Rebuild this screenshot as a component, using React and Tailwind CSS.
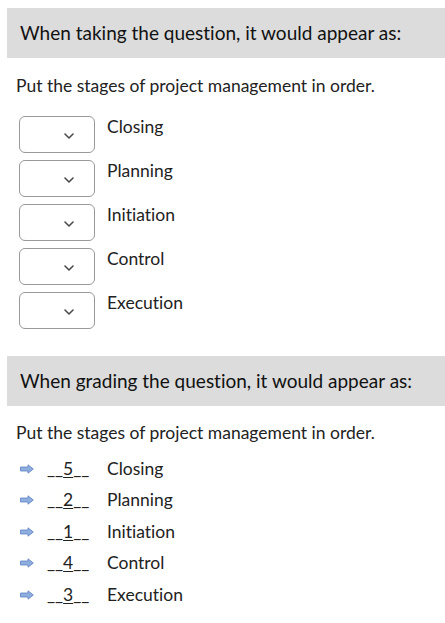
import React from 'react';

const stages = ['Closing', 'Planning', 'Initiation', 'Control', 'Execution'];
const answers = ['5', '2', '1', '4', '3'];

const Chevron = () => (
  <svg width="10" height="6" viewBox="0 0 10 6" fill="none">
    <path d="M1 1l4 4 4-4" stroke="#4b4b4b" strokeWidth="1.6" strokeLinecap="round" strokeLinejoin="round" />
  </svg>
);

const Arrow = () => (
  <svg width="14" height="10" viewBox="0 0 14 10">
    <path d="M0.5 3h7.5V0.8L13.3 5 8 9.2V7H0.5z" fill="#8eaee0" stroke="#5d82c0" strokeWidth="0.8" />
  </svg>
);

const Band = ({ children }) => (
  <div className="ml-[7px] h-[50px] bg-[#dcdcdc] flex items-center pl-[13px] text-[19px] text-[#111]">
    {children}
  </div>
);

export default function App() {
  return (
    <div
      className="w-[445px] h-[623px] bg-white text-[#222] pt-2 [font-variant-ligatures:none]"
      style={{ fontFamily: 'Lato, "Open Sans", sans-serif' }}
    >
      <Band>When taking the question, it would appear as:</Band>

      <p className="pl-4 mt-4 text-[17.5px] leading-6">Put the stages of project management in order.</p>

      <div className="mt-[18px] pl-[19px] flex flex-col gap-[7px]">
        {stages.map((s) => (
          <div key={s} className="flex items-start">
            <div className="w-[76px] h-[37px] border border-[#999] rounded-[6px] flex items-center justify-end pr-[20px] pt-[3px]">
              <Chevron />
            </div>
            <span className="ml-[12px] text-[17.5px] leading-6 -mt-[1px]">{s}</span>
          </div>
        ))}
      </div>

      <div className="mt-[27px]">
        <Band>When grading the question, it would appear as:</Band>
      </div>

      <p className="pl-4 mt-[15px] text-[17.5px] leading-6">Put the stages of project management in order.</p>

      <div className="mt-[8px] pl-[20px] flex flex-col">
        {stages.map((s, i) => (
          <div key={s} className="flex items-center h-[31.5px] text-[17.5px]">
            <Arrow />
            <span className="ml-[13px] w-[60px] text-[#222]">
              __<span className="underline underline-offset-2">{answers[i]}</span>__
            </span>
            <span>{s}</span>
          </div>
        ))}
      </div>
    </div>
  );
}
